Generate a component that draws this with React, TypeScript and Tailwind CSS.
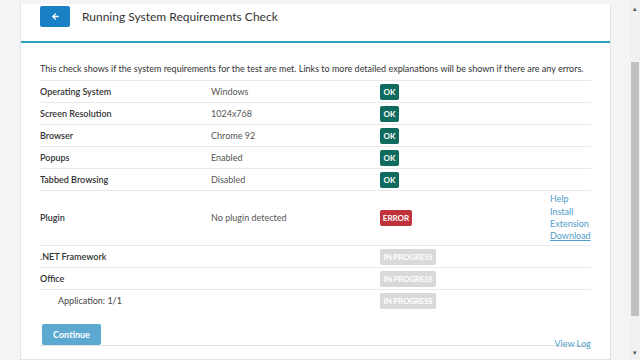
import { ArrowLeft } from "lucide-react";

type Status = "ok" | "error" | "progress";

interface Check {
  label: string;
  value?: string;
  status: Status;
  indent?: boolean;
}

const checks: Check[] = [
  { label: "Operating System", value: "Windows", status: "ok" },
  { label: "Screen Resolution", value: "1024x768", status: "ok" },
  { label: "Browser", value: "Chrome 92", status: "ok" },
  { label: "Popups", value: "Enabled", status: "ok" },
  { label: "Tabbed Browsing", value: "Disabled", status: "ok" },
];

const pending: Check[] = [
  { label: ".NET Framework", status: "progress" },
  { label: "Office", status: "progress" },
  { label: "Application: 1/1", status: "progress", indent: true },
];

function Badge({ status }: { status: Status }) {
  if (status === "ok")
    return (
      <span className="inline-flex items-center justify-center w-[19px] h-[16px] rounded-[2px] bg-[#0f6b5d] text-white text-[8px] font-bold">
        OK
      </span>
    );
  if (status === "error")
    return (
      <span className="inline-flex items-center justify-center w-[32px] h-[16px] rounded-[2px] bg-[#c0323b] text-white text-[8px] font-bold">
        ERROR
      </span>
    );
  return (
    <span className="inline-flex items-center justify-center w-[56px] h-[16px] rounded-[2px] bg-[#d9d9d9] text-white text-[8px] font-bold tracking-[-0.2px]">
      IN PROGRESS
    </span>
  );
}

function Row({ c }: { c: Check }) {
  return (
    <div className="flex items-center h-[22px] border-t border-[#e9e9ec]">
      <div
        className={
          c.indent
            ? "w-[171px] pl-[18px] text-[#444]"
            : "w-[171px] font-semibold text-[#333]"
        }
      >
        {c.label}
      </div>
      <div className="w-[169px] text-[#555]">{c.value}</div>
      <div className="flex items-center">
        <Badge status={c.status} />
      </div>
    </div>
  );
}

export default function App() {
  return (
    <div
      className="w-[640px] h-[360px] flex overflow-hidden bg-[#f4f4f6] text-[9px]"
      style={{ fontFamily: "Lato, 'Open Sans', sans-serif" }}
    >
      <div className="flex-1 pt-[4px] pl-[20px] pr-[19px] flex">
        {/* Panel */}
        <div className="flex-1 flex flex-col bg-white border-l border-r border-[#e3e3e6]">
          {/* Header */}
          <div className="h-[39px] flex items-start px-[19px] pt-[2px] border-b-2 border-[#2c9fb9]">
            <button className="w-[30px] h-[21px] rounded-[2px] bg-[#1a80c4] flex items-center justify-center">
              <ArrowLeft className="w-[9px] h-[9px] text-white" strokeWidth={3.5} />
            </button>
            <h1 className="ml-[12px] mt-[2px] text-[12px] text-[#333]">
              Running System Requirements Check
            </h1>
          </div>

          <div className="flex-1 flex flex-col px-[19px]">
            <p className="mt-[19px] h-[18px] whitespace-nowrap text-[#333]">
              This check shows if the system requirements for the test are met. Links to more detailed explanations will be shown if there are any errors.
            </p>

            <div className="flex flex-col">
              {checks.map((c) => (
                <Row key={c.label} c={c} />
              ))}

              {/* Plugin */}
              <div className="flex items-center h-[55px] border-t border-[#e9e9ec]">
                <div className="w-[171px] font-semibold text-[#333]">Plugin</div>
                <div className="w-[169px] text-[#555]">No plugin detected</div>
                <div className="w-[170px] flex items-center">
                  <Badge status="error" />
                </div>
                <div className="flex flex-col leading-[12.4px] text-[#4f9dcb] text-[9px]">
                  <span>Help</span>
                  <span>Install</span>
                  <span>Extension</span>
                  <span className="underline">Download</span>
                </div>
              </div>

              {pending.map((c) => (
                <Row key={c.label} c={c} />
              ))}
            </div>

            {/* Footer */}
            <div className="mt-[13px] flex items-end justify-between border-b border-[#e3e3e6] pl-[2px]">
              <button className="w-[59px] h-[21px] rounded-[2px] bg-[#5ba8d1] text-white font-bold text-[9px]">
                Continue
              </button>
              <span className="text-[#4f9dcb] text-[9px] mb-[-5px]">View Log</span>
            </div>
          </div>
          <div className="h-[10px] border-b border-[#e3e3e6]" />
        </div>
      </div>

      {/* Scrollbar */}
      <div className="w-[12px] bg-[#f1f1f1] flex flex-col items-center">
        <span className="text-[6px] leading-[10px] text-[#555] mt-[4px]">▲</span>
        <div className="mt-[48px] w-[8px] h-[254px] bg-[#c1c1c1]" />
        <span className="mt-auto mb-[2px] text-[6px] leading-[10px] text-[#555]">▼</span>
      </div>
    </div>
  );
}
